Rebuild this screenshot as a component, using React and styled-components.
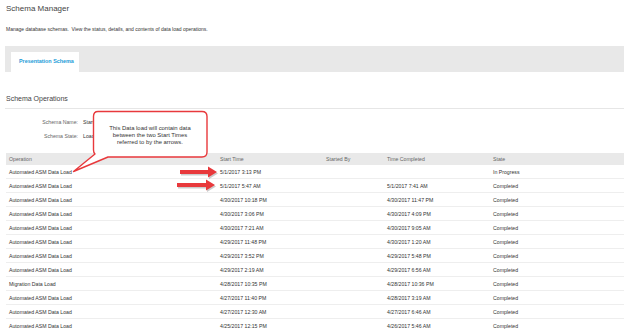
import React from "react";
import styled, { createGlobalStyle } from "styled-components";

const Global = createGlobalStyle`
  html, body { margin: 0; padding: 0; background: #fff; }
  body { font-family: "Liberation Sans", Arial, sans-serif; color: #333; overflow: hidden; }
`;

const Page = styled.div`
  position: relative;
  width: 624px;
  height: 331px;
  overflow: hidden;
  padding-left: 5px;
  box-sizing: border-box;
`;

const Title = styled.h1`
  margin: 4px 0 0 1px;
  font-size: 8px;
  line-height: 10px;
  font-weight: 400;
  color: #444;
`;

const Desc = styled.p`
  margin: 12px 0 0 1px;
  font-size: 5px;
  line-height: 6px;
  color: #333;
`;

const TabBand = styled.div`
  margin-top: 14px;
  height: 26px;
  background: #e8e8e8;
  padding: 6px 0 0 6px;
  box-sizing: border-box;
  display: flex;
  align-items: flex-end;
`;

const Tab = styled.div`
  width: 68px;
  height: 20px;
  background: #fff;
  box-sizing: border-box;
  padding: 0 0 2px 8px;
  display: flex;
  align-items: center;
  font-size: 5.4px;
  font-weight: 600;
  color: #1b9bd7;
`;

const SectionTitle = styled.h2`
  margin: 23px 0 0 0;
  padding: 0 0 5px 1px;
  font-size: 7px;
  line-height: 8px;
  font-weight: 400;
  color: #444;
  border-bottom: 1px solid #e6e6e6;
`;

const Fields = styled.div`
  margin-top: 6px;
  display: grid;
  grid-template-columns: 73px auto;
  column-gap: 5px;
  grid-auto-rows: 14px;
  align-items: center;
  font-size: 5.2px;
`;

const Label = styled.div`
  text-align: right;
  color: #666;
`;

const Value = styled.div`
  color: #333;
`;

const Table = styled.div`
  margin-top: 10px;
  margin-left: 1px;
  display: grid;
  grid-template-columns: 211px 106px 61px 106px 1fr;
  font-size: 5.2px;
`;

const HeadCell = styled.div`
  height: 12px;
  background: #e9e9e9;
  color: #666;
  padding: 0 0 0 3px;
  display: flex;
  align-items: center;
  box-sizing: border-box;
`;

const Cell = styled.div`
  height: 14px;
  box-sizing: border-box;
  border-bottom: 1px solid #eeeeee;
  padding: 0 0 0 3px;
  display: flex;
  align-items: center;
  color: #333;
  white-space: nowrap;
`;

const Overlay = styled.div`
  position: absolute;
  left: 0;
  top: 0;
  width: 624px;
  height: 331px;
  pointer-events: none;
`;

const Drawing = styled.svg`
  position: absolute;
  left: 0;
  top: 0;
`;

const CalloutText = styled.div`
  position: absolute;
  left: ${(p) => p.x}px;
  top: ${(p) => p.y}px;
  width: ${(p) => p.w}px;
  text-align: center;
  font-size: 5.9px;
  line-height: 7px;
  color: #333;
`;

const rows = [
  ["Automated ASM Data Load", "5/1/2017 3:13 PM", "", "", "In Progress"],
  ["Automated ASM Data Load", "5/1/2017 5:47 AM", "", "5/1/2017 7:41 AM", "Completed"],
  ["Automated ASM Data Load", "4/30/2017 10:18 PM", "", "4/30/2017 11:47 PM", "Completed"],
  ["Automated ASM Data Load", "4/30/2017 3:06 PM", "", "4/30/2017 4:09 PM", "Completed"],
  ["Automated ASM Data Load", "4/30/2017 7:21 AM", "", "4/30/2017 9:05 AM", "Completed"],
  ["Automated ASM Data Load", "4/29/2017 11:48 PM", "", "4/30/2017 1:20 AM", "Completed"],
  ["Automated ASM Data Load", "4/29/2017 3:52 PM", "", "4/29/2017 5:48 PM", "Completed"],
  ["Automated ASM Data Load", "4/29/2017 2:19 AM", "", "4/29/2017 6:56 AM", "Completed"],
  ["Migration Data Load", "4/28/2017 10:35 PM", "", "4/28/2017 10:36 PM", "Completed"],
  ["Automated ASM Data Load", "4/27/2017 11:40 PM", "", "4/28/2017 3:19 AM", "Completed"],
  ["Automated ASM Data Load", "4/27/2017 12:30 AM", "", "4/27/2017 6:46 AM", "Completed"],
  ["Automated ASM Data Load", "4/25/2017 12:15 PM", "", "4/26/2017 5:46 AM", "Completed"],
];

const headers = ["Operation", "Start Time", "Started By", "Time Completed", "State"];

const RED = "#e8393c";

function Arrow({ x1, x2, y }) {
  const head = 9;
  const hx = x2 - head;
  const s = 2;
  const h = 5.5;
  const d = `M${x1} ${y - s} L${hx} ${y - s} L${hx} ${y - h} L${x2} ${y} L${hx} ${y + h} L${hx} ${y + s} L${x1} ${y + s} Z`;
  return (
    <g>
      <path d={d} fill="#000" opacity="0.2" transform="translate(1 1.5)" />
      <path d={d} fill={RED} />
    </g>
  );
}

export default function App() {
  const calloutPath =
    "M98 111.5 L202 111.5 Q207 111.5 207 116.5 L207 152 Q207 157 202 157 L108 157 L73.5 171.5 L95 154 Q93.5 152.5 93.5 150 L93.5 116.5 Q93.5 111.5 98 111.5 Z";
  return (
    <>
      <Global />
      <Page>
        <Title>Schema Manager</Title>
        <Desc>Manage database schemas.&nbsp; View the status, details, and contents of data load operations.</Desc>
        <TabBand>
          <Tab>Presentation Schema</Tab>
        </TabBand>
        <SectionTitle>Schema Operations</SectionTitle>
        <Fields>
          <Label>Schema Name:</Label>
          <Value>Started</Value>
          <Label>Schema State:</Label>
          <Value>Loading</Value>
        </Fields>
        <Table>
          {headers.map((h) => (
            <HeadCell key={h}>{h}</HeadCell>
          ))}
          {rows.map((r, i) =>
            r.map((c, j) => <Cell key={`${i}-${j}`}>{c}</Cell>)
          )}
        </Table>
        <Overlay>
          <Drawing width="624" height="331" viewBox="0 0 624 331">
            <path d={calloutPath} fill="#fff" stroke={RED} strokeWidth="1.4" strokeLinejoin="round" />
            <Arrow x1={180} x2={217} y={172} />
            <Arrow x1={177} x2={215} y={185} />
          </Drawing>
          <CalloutText x={93} y={125} w={114}>
            This Data load will contain data
            <br />
            between the two Start Times
            <br />
            referred to by the arrows.
          </CalloutText>
        </Overlay>
      </Page>
    </>
  );
}
